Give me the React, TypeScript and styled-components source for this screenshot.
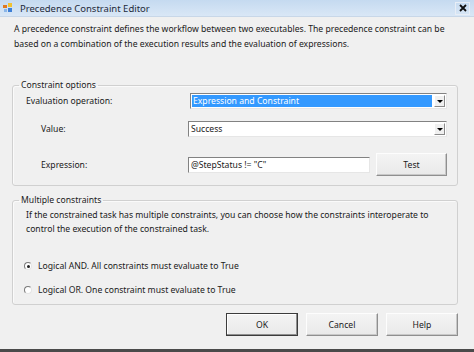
import React from 'react';
import styled, { createGlobalStyle } from 'styled-components';

const GlobalStyle = createGlobalStyle`
  html, body {
    margin: 0;
    padding: 0;
    background: #f0f0f0;
  }
  body {
    font-family: 'Noto Sans', 'Open Sans', sans-serif;
    font-size: 8.65px;
    color: #1a1a1a;
  }
`;

const Window = styled.div`
  width: 474px;
  height: 352px;
  display: flex;
  flex-direction: column;
  background: #f0f0f0;
  overflow: hidden;
`;

const TitleBar = styled.div`
  height: 17px;
  flex: none;
  display: flex;
  align-items: center;
  padding: 0 4px 0 3px;
  background: linear-gradient(#c5daf0, #d9e7f6);
  border-bottom: 1px solid #c8d7e8;
  box-sizing: border-box;
`;

const TitleText = styled.span`
  margin-left: 7px;
  flex: 1;
  font-size: 9.5px;
  color: #1e2a3a;
`;

const CloseBox = styled.div`
  width: 15px;
  height: 13px;
  box-sizing: border-box;
  border: 1px solid #e8eef6;
  display: flex;
  align-items: center;
  justify-content: center;
`;

const Body = styled.div`
  flex: 1;
  display: flex;
  flex-direction: column;
  padding: 5px 16px 0 12px;
`;

const Description = styled.p`
  margin: 0 0 0 2px;
  line-height: 15px;
`;

const Group = styled.fieldset<{ $top: number }>`
  margin: ${p => p.$top}px 0 0 0;
  padding: 0 10px 0 0;
  border: 1px solid #d0d0d0;
  border-radius: 3px;
  box-shadow: inset 1px 1px 0 #fafafa;
  min-width: 0;
`;

const Legend = styled.legend`
  margin-left: 6px;
  padding: 0 2px;
  line-height: 12px;
`;

const Row = styled.div<{ $top: number; $height: number }>`
  display: flex;
  align-items: center;
  margin-top: ${p => p.$top}px;
  height: ${p => p.$height}px;
`;

const Label = styled.span<{ $indent: number; $width: number }>`
  flex: none;
  box-sizing: border-box;
  padding-left: ${p => p.$indent}px;
  width: ${p => p.$width}px;
`;

const Field = styled.div`
  flex: 1;
  height: 16px;
  box-sizing: border-box;
  display: flex;
  align-items: stretch;
  background: #fff;
  border: 1px solid;
  border-color: #828282 #e6e6e6 #e6e6e6 #828282;
`;

const FieldText = styled.span<{ $selected?: boolean }>`
  flex: 1;
  display: flex;
  align-items: center;
  margin: 1px;
  padding-left: 1px;
  background: ${p => (p.$selected ? '#3399ff' : 'transparent')};
  color: ${p => (p.$selected ? '#fff' : '#1a1a1a')};
`;

const ArrowButton = styled.span`
  width: 11px;
  flex: none;
  margin: 1px;
  box-sizing: border-box;
  background: #f0f0f0;
  border: 1px solid;
  border-color: #fff #8a8a8a #8a8a8a #fff;
  display: flex;
  align-items: center;
  justify-content: center;
  &::after {
    content: '';
    border-left: 3px solid transparent;
    border-right: 3px solid transparent;
    border-top: 3px solid #000;
  }
`;

const ExprInput = styled(Field)`
  flex: none;
  width: 182px;
`;

const Button = styled.button<{ $isDefault?: boolean }>`
  width: 72px;
  height: 23px;
  box-sizing: border-box;
  font: inherit;
  color: #1a1a1a;
  background: linear-gradient(#f4f4f4, #e9e9e9);
  border: 1px solid;
  border-color: ${p => (p.$isDefault ? '#3c3c3c' : '#fdfdfd #8f8f8f #8f8f8f #fdfdfd')};
  box-shadow: ${p => (p.$isDefault ? 'inset -1px -1px 0 #8f8f8f, inset 1px 1px 0 #fff' : 'inset -1px -1px 0 #c8c8c8')};
  padding: 0;
`;

const TestButton = styled(Button)`
  margin-left: 6px;
  width: 71px;
`;

const Paragraph = styled.p`
  margin: 2px 0 0 13px;
  line-height: 14px;
`;

const RadioRow = styled.label<{ $top: number }>`
  display: flex;
  align-items: center;
  height: 16px;
  margin: ${p => p.$top}px 0 0 11px;
  gap: 6px;
`;

const Radio = styled.span<{ $checked?: boolean }>`
  width: 8px;
  height: 8px;
  box-sizing: border-box;
  border-radius: 50%;
  border: 1px solid;
  border-color: #7a7a7a #e4e4e4 #e4e4e4 #7a7a7a;
  background: #fff;
  display: flex;
  align-items: center;
  justify-content: center;
  &::after {
    content: '';
    width: 3px;
    height: 3px;
    border-radius: 50%;
    background: ${p => (p.$checked ? '#222' : 'transparent')};
  }
`;

const Footer = styled.div`
  display: flex;
  justify-content: flex-end;
  gap: 8px;
  margin-top: 8px;
`;

const BottomStrip = styled.div`
  height: 3px;
  flex: none;
  margin-top: auto;
  background: #4a4a4a;
`;

const AppIcon = () => (
  <svg width="10" height="10" viewBox="0 0 10 10">
    <rect x="0" y="2" width="4" height="3" fill="#e07a1f" />
    <rect x="5" y="0" width="4" height="4" fill="#f1c232" />
    <rect x="5" y="5" width="4" height="4" fill="#3d7fd6" />
    <rect x="1" y="6" width="3" height="3" fill="#8bb6e8" />
  </svg>
);

const CloseIcon = () => (
  <svg width="8" height="8" viewBox="0 0 8 8">
    <path d="M1 1 L7 7 M7 1 L1 7" stroke="#111" strokeWidth="1.8" />
  </svg>
);

export default function App() {
  return (
    <Window>
      <GlobalStyle />
      <TitleBar>
        <AppIcon />
        <TitleText>Precedence Constraint Editor</TitleText>
        <CloseBox>
          <CloseIcon />
        </CloseBox>
      </TitleBar>
      <Body>
        <Description>
          A precedence constraint defines the workflow between two executables. The precedence constraint can be
          <br />
          based on a combination of the execution results and the evaluation of expressions.
        </Description>

        <Group $top={27}>
          <Legend>Constraint options</Legend>
          <Row $top={2} $height={16}>
            <Label $indent={13} $width={177}>Evaluation operation:</Label>
            <Field>
              <FieldText $selected>Expression and Constraint</FieldText>
              <ArrowButton />
            </Field>
          </Row>
          <Row $top={12} $height={16}>
            <Label $indent={28} $width={175}>Value:</Label>
            <Field>
              <FieldText>Success</FieldText>
              <ArrowButton />
            </Field>
          </Row>
          <Row $top={16} $height={23}>
            <Label $indent={28} $width={175}>Expression:</Label>
            <ExprInput>
              <FieldText>@StepStatus != "C"</FieldText>
            </ExprInput>
            <TestButton>Test</TestButton>
          </Row>
          <Row $top={0} $height={9} />
        </Group>

        <Group $top={8}>
          <Legend>Multiple constraints</Legend>
          <Paragraph>
            If the constrained task has multiple constraints, you can choose how the constraints interoperate to
            <br />
            control the execution of the constrained task.
          </Paragraph>
          <RadioRow $top={22}>
            <Radio $checked />
            Logical AND. All constraints must evaluate to True
          </RadioRow>
          <RadioRow $top={8}>
            <Radio />
            Logical OR. One constraint must evaluate to True
          </RadioRow>
          <Row $top={0} $height={6} />
        </Group>

        <Footer>
          <Button $isDefault>OK</Button>
          <Button>Cancel</Button>
          <Button>Help</Button>
        </Footer>
      </Body>
      <BottomStrip />
    </Window>
  );
}
